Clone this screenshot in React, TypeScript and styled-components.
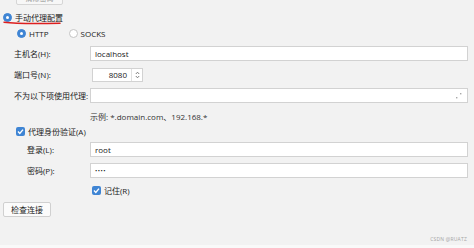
import React from 'react';
import styled, { createGlobalStyle } from 'styled-components';

const GlobalStyle = createGlobalStyle`
    html, body {
        margin: 0;
        padding: 0;
        background: #f2f2f2;
    }
    body {
        font-family: "Open Sans", "Noto Sans CJK SC", sans-serif;
        font-size: 8px;
        color: #202020;
    }
`;

export default function App(): JSX.Element {
    return (
        <>
            <GlobalStyle />
            <Page>
                <CutButton>清除密码</CutButton>

                <OptionRow $top={5} $indent={3}>
                    <Radio $checked />
                    <span>手动代理配置</span>
                    <Underline viewBox="0 0 58 4" preserveAspectRatio="none">
                        <path d="M1 1.2 C 12 2.6, 30 2.8, 57 2.2" />
                    </Underline>
                </OptionRow>

                <OptionRow $top={2} $indent={17} $gap={20}>
                    <Choice>
                        <Radio $checked />
                        <span>HTTP</span>
                    </Choice>
                    <Choice>
                        <Radio />
                        <span>SOCKS</span>
                    </Choice>
                </OptionRow>

                <FieldGrid $top={6} $indent={14} $labelWidth={76}>
                    <FieldLabel>主机名(H):</FieldLabel>
                    <TextBox>localhost</TextBox>

                    <FieldLabel>端口号(N):</FieldLabel>
                    <PortBox>
                        <PortValue>8080</PortValue>
                        <Spinner>
                            <svg width="5" height="8" viewBox="0 0 5 8">
                                <path d="M0.8 3 L2.5 1.2 L4.2 3" />
                                <path d="M0.8 5 L2.5 6.8 L4.2 5" />
                            </svg>
                        </Spinner>
                    </PortBox>

                    <FieldLabel>不为以下项使用代理:</FieldLabel>
                    <TextBox>
                        <Grip viewBox="0 0 6 6" width="6" height="6">
                            <rect x="4" y="0" width="1.4" height="1.4" />
                            <rect x="0" y="4" width="1.4" height="1.4" />
                        </Grip>
                    </TextBox>
                </FieldGrid>

                <Hint>示例: *.domain.com、192.168.*</Hint>

                <OptionRow $top={2} $indent={16}>
                    <CheckBox />
                    <span>代理身份验证(A)</span>
                </OptionRow>

                <FieldGrid $top={4} $indent={27} $labelWidth={63}>
                    <FieldLabel>登录(L):</FieldLabel>
                    <TextBox>root</TextBox>

                    <FieldLabel>密码(P):</FieldLabel>
                    <TextBox>
                        <Dots>••••</Dots>
                    </TextBox>
                </FieldGrid>

                <OptionRow $top={5} $indent={92}>
                    <CheckBox />
                    <span>记住(R)</span>
                </OptionRow>

                <PlainButton>检查连接</PlainButton>

                <Watermark>CSDN @RUATZ</Watermark>
            </Page>
        </>
    );
}

function CheckBox(): JSX.Element {
    return (
        <CheckSquare>
            <svg width="9" height="9" viewBox="0 0 9 9">
                <path d="M2 4.6 L3.8 6.4 L7 2.6" />
            </svg>
        </CheckSquare>
    );
}

const Page = styled.div`
    position: relative;
    width: 474px;
    height: 248px;
    overflow: hidden;
    padding-right: 6px;
    box-sizing: border-box;
    border-bottom: 3px solid #f9f9f9;
`;

const CutButton = styled.div`
    width: 47px;
    height: 14px;
    margin: -9px 0 0 16px;
    box-sizing: border-box;
    border: 1px solid #d6d6d6;
    border-radius: 2px;
    background: #f7f7f7;
    color: #9a9a9a;
    font-size: 7px;
    display: flex;
    align-items: center;
    justify-content: center;
`;

const OptionRow = styled.div<{ $top: number; $indent: number; $gap?: number }>`
    position: relative;
    height: 14px;
    margin-top: ${p => p.$top}px;
    padding-left: ${p => p.$indent}px;
    display: flex;
    align-items: center;
    gap: ${p => p.$gap ?? 3}px;
`;

const Choice = styled.div`
    display: flex;
    align-items: center;
    gap: 3px;
`;

const Radio = styled.span<{ $checked?: boolean }>`
    width: 9px;
    height: 9px;
    border-radius: 50%;
    box-sizing: border-box;
    flex: none;
    background: ${p => (p.$checked ? '#3f85d4' : '#ffffff')};
    border: 1px solid ${p => (p.$checked ? '#3f85d4' : '#c4c4c4')};
    display: grid;
    place-items: center;

    &::after {
        content: '';
        width: 3px;
        height: 3px;
        border-radius: 50%;
        background: #ffffff;
        display: ${p => (p.$checked ? 'block' : 'none')};
    }
`;

const Underline = styled.svg`
    position: absolute;
    left: 3px;
    top: 11px;
    width: 58px;
    height: 4px;
    overflow: visible;

    path {
        fill: none;
        stroke: #dd1f1f;
        stroke-width: 1.5;
        stroke-linecap: round;
    }
`;

const CheckSquare = styled.span`
    width: 9px;
    height: 9px;
    border-radius: 2px;
    background: #3f85d4;
    flex: none;
    display: grid;
    place-items: center;

    path {
        fill: none;
        stroke: #ffffff;
        stroke-width: 1.4;
    }
`;

const FieldGrid = styled.div<{ $top: number; $indent: number; $labelWidth: number }>`
    margin-top: ${p => p.$top}px;
    padding-left: ${p => p.$indent}px;
    display: grid;
    grid-template-columns: ${p => p.$labelWidth}px 1fr;
    grid-auto-rows: 15px;
    row-gap: 6px;
    align-items: center;
`;

const FieldLabel = styled.span`
    white-space: nowrap;
`;

const TextBox = styled.div`
    position: relative;
    height: 15px;
    box-sizing: border-box;
    border: 1px solid #d2d2d2;
    background: #ffffff;
    padding-left: 4px;
    display: flex;
    align-items: center;
`;

const Grip = styled.svg`
    position: absolute;
    right: 5px;
    top: 4px;
    fill: #a8a8a8;
`;

const Dots = styled.span`
    font-size: 6px;
    letter-spacing: 0.5px;
`;

const PortBox = styled.div`
    width: 51px;
    height: 14px;
    margin-left: 2px;
    box-sizing: border-box;
    border: 1px solid #d2d2d2;
    background: #ffffff;
    display: flex;
`;

const PortValue = styled.span`
    flex: 1;
    padding-right: 4px;
    display: flex;
    align-items: center;
    justify-content: flex-end;
`;

const Spinner = styled.span`
    width: 10px;
    border-left: 1px solid #e0e0e0;
    display: grid;
    place-items: center;

    path {
        fill: none;
        stroke: #707070;
        stroke-width: 0.9;
    }
`;

const Hint = styled.div`
    height: 12px;
    margin-top: 7px;
    padding-left: 90px;
    display: flex;
    align-items: center;
    color: #333333;
`;

const PlainButton = styled.div`
    width: 48px;
    height: 15px;
    margin: 5px 0 0 3px;
    box-sizing: border-box;
    border: 1px solid #d0d0d0;
    border-radius: 2px;
    background: #fbfbfb;
    display: flex;
    align-items: center;
    justify-content: center;
`;

const Watermark = styled.span`
    position: absolute;
    right: 7px;
    bottom: 3px;
    font-size: 5px;
    color: #a5a5a5;
    letter-spacing: 0.2px;
`;
